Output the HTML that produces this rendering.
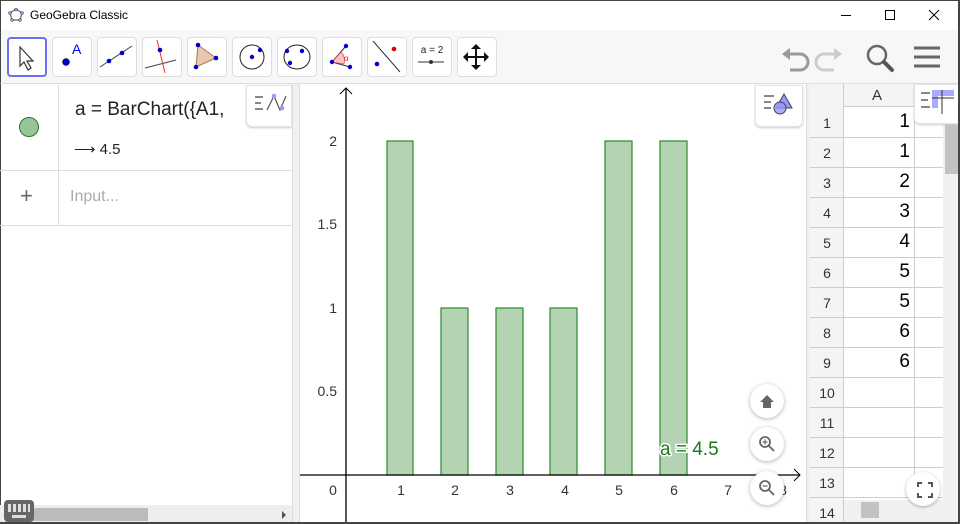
<!DOCTYPE html>
<html style="overflow:hidden"><head><meta charset="utf-8"><style>
*{margin:0;padding:0;box-sizing:border-box}
body{width:960px;height:524px;overflow:hidden;background:#fff;font-family:"Liberation Sans",sans-serif;position:relative}
.a{position:absolute}
.tb{position:absolute;top:37px;width:40px;height:40px;border:1px solid #ddd;border-radius:4px;background:#fff}
.sp div{position:absolute}
</style></head><body>
<div class="a" style="left:0;top:0;width:960px;height:30px;background:#fff;border-left:1px solid #444;border-right:1px solid #444;border-top:1px solid #444"></div>
<svg class="a" style="left:8px;top:8px" width="16" height="14"><polygon points="8,1 14,5 12,12 4,12 2,5" fill="none" stroke="#666" stroke-width="1.2"/><g fill="#99f" stroke="#333" stroke-width=".5"><circle cx="8" cy="1.5" r="1.5"/><circle cx="14" cy="5" r="1.5"/><circle cx="12" cy="12" r="1.5"/><circle cx="4" cy="12" r="1.5"/><circle cx="2" cy="5" r="1.5"/></g></svg>
<div class="a" style="left:30px;top:8px;font-size:12px;color:#000">GeoGebra Classic</div>
<svg class="a" style="left:838px;top:8px" width="110" height="14" stroke="#000" fill="none"><line x1="3" y1="7.5" x2="13" y2="7.5"/><rect x="47.5" y="2.5" width="9" height="9"/><path d="M91 2L101 12M101 2L91 12"/></svg>
<div class="a" style="left:0;top:30px;width:960px;height:54px;background:#f7f7f7;border-bottom:1px solid #ddd;border-left:1px solid #444;border-right:1px solid #444"></div>
<div class="tb" style="left:7px;border:2px solid #6d6df0"></div>
<div class="tb" style="left:52px"></div><div class="tb" style="left:97px"></div><div class="tb" style="left:142px"></div><div class="tb" style="left:187px"></div><div class="tb" style="left:232px"></div><div class="tb" style="left:277px"></div><div class="tb" style="left:322px"></div><div class="tb" style="left:367px"></div><div class="tb" style="left:412px"></div><div class="tb" style="left:457px"></div>
<svg class="a" style="left:0;top:37px" width="500" height="40">
<path d="M20 10L20 29L24 25L28 33L31 31L27 24L33 24Z" fill="#fff" stroke="#333" stroke-width="1.2"/>
<circle cx="66" cy="25" r="3.5" fill="#00c" stroke="#000" stroke-width=".5"/><text x="72" y="17" font-size="14" fill="#00f" font-family="Liberation Sans">A</text>
<line x1="100" y1="30" x2="132" y2="9" stroke="#444"/><circle cx="109" cy="24" r="2.3" fill="#00c"/><circle cx="122" cy="16" r="2.3" fill="#00c"/>
<line x1="145" y1="31" x2="176" y2="23" stroke="#444"/><line x1="157" y1="3" x2="165" y2="36" stroke="#e33"/><circle cx="160" cy="13" r="2.3" fill="#00c"/>
<polygon points="198,8 216,21 196,30" fill="#e8c8b0" stroke="#b07050"/><circle cx="198" cy="8" r="2.3" fill="#00c"/><circle cx="216" cy="21" r="2.3" fill="#00c"/><circle cx="196" cy="30" r="2.3" fill="#00c"/>
<circle cx="252" cy="20" r="12" fill="none" stroke="#222"/><circle cx="252" cy="20" r="2.2" fill="#00c"/><circle cx="260" cy="13" r="2.2" fill="#00c"/>
<ellipse cx="297" cy="20" rx="13" ry="12" fill="none" stroke="#222"/><circle cx="287" cy="14" r="2.2" fill="#00c"/><circle cx="302" cy="14" r="2.2" fill="#00c"/><circle cx="290" cy="26" r="2.2" fill="#00c"/>
<path d="M332 25L346 9M332 25L350 30" stroke="#333" fill="none"/><path d="M332 25L341 15A12 12 0 0 1 344 27Z" fill="#f8c0c0" stroke="#d33" stroke-width=".6"/><text x="344" y="24" font-size="8" fill="#d33">α</text><circle cx="332" cy="25" r="2.2" fill="#00c"/><circle cx="346" cy="9" r="2.2" fill="#00c"/><circle cx="350" cy="30" r="2.2" fill="#00c"/>
<line x1="373" y1="4" x2="400" y2="35" stroke="#333"/><circle cx="394" cy="12" r="2.3" fill="#d00"/><circle cx="377" cy="27" r="2.3" fill="#00c"/>
<text x="432" y="16" font-size="10" text-anchor="middle" fill="#222">a = 2</text><line x1="418" y1="25" x2="444" y2="25" stroke="#333"/><circle cx="431" cy="25" r="2" fill="#333"/>
<g fill="#111"><rect x="466" y="19" width="20" height="2"/><rect x="475" y="10" width="2" height="20"/><polygon points="476,7 471,12 481,12"/><polygon points="476,33 471,28 481,28"/><polygon points="463,20 468,15 468,25"/><polygon points="489,20 484,15 484,25"/></g>
</svg>
<svg class="a" style="left:780px;top:40px" width="170" height="36" fill="none">
<path d="M6 14H20a8 8 0 0 1 0 16H10" stroke="#999" stroke-width="3"/><polygon points="2,14 10,8 10,20" fill="#999"/>
<path d="M58 14H44a8 8 0 0 0 0 16H54" stroke="#ccc" stroke-width="3"/><polygon points="62,14 54,8 54,20" fill="#ccc"/>
<circle cx="97" cy="15" r="9" stroke="#666" stroke-width="2.5"/><line x1="104" y1="22" x2="112" y2="30" stroke="#555" stroke-width="4" stroke-linecap="round"/>
<path d="M134 8H160M134 17H160M134 26H160" stroke="#666" stroke-width="3"/>
</svg>
<div class="a" style="left:0;top:84px;width:1px;height:440px;background:#444"></div>
<div class="a" style="left:58px;top:85px;width:1px;height:140px;background:#ddd"></div>
<div class="a" style="left:0;top:170px;width:292px;height:1px;background:#ddd"></div>
<div class="a" style="left:0;top:225px;width:292px;height:1px;background:#ddd"></div>
<div class="a" style="left:19px;top:117px;width:20px;height:20px;border-radius:50%;background:#99c499;border:1px solid #2a7a2a"></div>
<div class="a" style="left:75px;top:99px;font-size:19px;color:#222;white-space:nowrap;width:172px;overflow:hidden">a = BarChart({A1,</div>
<div class="a" style="left:74px;top:140px;font-size:15px;color:#222">⟶ 4.5</div>
<div class="a" style="left:20px;top:184px;font-size:22px;color:#666;line-height:24px">+</div>
<div class="a" style="left:70px;top:188px;font-size:16px;color:#aaa">Input...</div>
<div class="a" style="left:246px;top:85px;width:46px;height:42px;background:#fff;border:1px solid #e4e4e4;border-radius:0 0 0 6px;box-shadow:0 1px 2px #ccc"></div>
<svg class="a" style="left:254px;top:92px" width="36" height="26"><path d="M1 5H9M1 11H7M1 17H9" stroke="#888" stroke-width="2"/><path d="M13 18L20 4L26 18L32 4" stroke="#555" fill="none" stroke-width="1.2"/><circle cx="20" cy="4" r="2.3" fill="#99f"/><circle cx="28" cy="16" r="2.3" fill="#99f"/></svg>
<div class="a" style="left:0;top:505px;width:292px;height:17px;background:#eee"></div>
<div class="a" style="left:8px;top:508px;width:140px;height:13px;background:#bbb"></div>
<div class="a" style="left:282px;top:511px;width:0;height:0;border-left:4px solid #555;border-top:4px solid transparent;border-bottom:4px solid transparent"></div>
<div class="a" style="left:4px;top:500px;width:30px;height:22px;background:#666;border-radius:4px"></div>
<div class="a" style="left:8px;top:504px;width:22px;height:8px;background:repeating-linear-gradient(90deg,#ddd 0 3px,transparent 3px 5px)"></div>
<div class="a" style="left:12px;top:515px;width:14px;height:3px;background:#ddd"></div>
<div class="a" style="left:292px;top:84px;width:8px;height:440px;background:#f0f0f0;border-left:1px solid #ddd;border-right:1px solid #ddd"></div>
<svg class="a" style="left:300px;top:84px" width="508" height="440" font-family="Liberation Sans" font-size="14">
<g fill="#b3d3b3" stroke="#2a8a2a" stroke-width="1.2">
<rect x="87" y="57" width="26" height="334"/><rect x="141" y="224" width="27" height="167"/><rect x="196" y="224" width="27" height="167"/><rect x="250" y="224" width="27" height="167"/><rect x="305" y="57" width="27" height="334"/><rect x="360" y="57" width="27" height="334"/>
</g>
<line x1="46" y1="4" x2="46" y2="440" stroke="#000" stroke-width="1.3"/><path d="M40 10L46 4L52 10" fill="none" stroke="#000"/>
<line x1="0" y1="391" x2="500" y2="391" stroke="#000" stroke-width="1.3"/><path d="M494 385L500 391L494 397" fill="none" stroke="#000"/>
<g fill="#333" text-anchor="end"><text x="37" y="62">2</text><text x="37" y="145">1.5</text><text x="37" y="229">1</text><text x="37" y="312">0.5</text></g>
<g fill="#333" text-anchor="middle"><text x="33" y="411">0</text><text x="101" y="411">1</text><text x="155" y="411">2</text><text x="210" y="411">3</text><text x="265" y="411">4</text><text x="319" y="411">5</text><text x="374" y="411">6</text><text x="428" y="411">7</text><text x="483" y="411">8</text></g>
<text x="360" y="371" font-size="19" fill="#1a7a1a" stroke="#fff" stroke-width="3" paint-order="stroke">a = 4.5</text>
<g fill="#fff" style="filter:drop-shadow(0 1px 2px rgba(0,0,0,.3))"><circle cx="467" cy="317" r="17"/><circle cx="467" cy="360" r="17"/><circle cx="467" cy="404" r="17"/></g>
<path d="M460 318L467 311L474 318H471V324H463V318Z" fill="#666"/>
<g stroke="#666" fill="none" stroke-width="1.8"><circle cx="465" cy="358" r="5"/><line x1="469" y1="362" x2="474" y2="367"/><path d="M462.5 358H467.5M465 355.5V360.5" stroke-width="1.2"/><circle cx="465" cy="402" r="5"/><line x1="469" y1="406" x2="474" y2="411"/><path d="M462.5 402H467.5" stroke-width="1.2"/></g>
</svg>
<div class="a" style="left:755px;top:85px;width:48px;height:42px;background:#fff;border:1px solid #e4e4e4;border-radius:0 0 6px 6px;box-shadow:0 1px 2px #ccc"></div>
<svg class="a" style="left:763px;top:93px" width="34" height="26"><path d="M1 3H11M1 9H8M1 15H8" stroke="#888" stroke-width="2"/><polygon points="21,1 29,15 13,15" fill="#99f" stroke="#444"/><circle cx="17" cy="15" r="6" fill="#99f" stroke="#444" fill-opacity=".8"/></svg>
<div class="a" style="left:806px;top:84px;width:4px;height:440px;background:#f0f0f0;border-left:1px solid #ddd"></div>
<div class="a sp" style="left:810px;top:84px;width:150px;height:438px;overflow:hidden;background:#fff;font-size:16px">
<div style="left:0;top:0;width:150px;height:23px;background:#f4f4f4;border-bottom:1px solid #ccc"></div>
<div style="left:0;top:0;width:34px;height:440px;background:#f4f4f4;border-right:1px solid #ccc"></div>
<div style="left:104px;top:0;width:1px;height:440px;background:#ccc"></div>
<div style="left:62px;top:3px;font-size:15px;color:#333">A</div>
<div style="left:0;top:53px;width:133px;height:1px;background:#ccc"></div><div style="left:0;top:83px;width:133px;height:1px;background:#ccc"></div><div style="left:0;top:113px;width:133px;height:1px;background:#ccc"></div><div style="left:0;top:143px;width:133px;height:1px;background:#ccc"></div><div style="left:0;top:173px;width:133px;height:1px;background:#ccc"></div><div style="left:0;top:203px;width:133px;height:1px;background:#ccc"></div><div style="left:0;top:233px;width:133px;height:1px;background:#ccc"></div><div style="left:0;top:263px;width:133px;height:1px;background:#ccc"></div><div style="left:0;top:293px;width:133px;height:1px;background:#ccc"></div><div style="left:0;top:323px;width:133px;height:1px;background:#ccc"></div><div style="left:0;top:353px;width:133px;height:1px;background:#ccc"></div><div style="left:0;top:383px;width:133px;height:1px;background:#ccc"></div><div style="left:0;top:413px;width:133px;height:1px;background:#ccc"></div>
<div style="left:0;top:24px;width:34px;text-align:center;font-size:14px;line-height:30px;color:#333">1<br>2<br>3<br>4<br>5<br>6<br>7<br>8<br>9<br>10<br>11<br>12<br>13<br>14</div>
<div style="left:40px;top:23px;width:60px;text-align:right;font-size:19px;line-height:30px;color:#000">1<br>1<br>2<br>3<br>4<br>5<br>5<br>6<br>6</div>
<div style="left:133px;top:23px;width:17px;height:400px;background:#f0f0f0"></div>
<div style="left:135px;top:40px;width:13px;height:50px;background:#c2c2c2"></div>
<div style="left:34px;top:416px;width:116px;height:22px;background:#f0f0f0"></div>
<div style="left:51px;top:418px;width:18px;height:16px;background:#c2c2c2"></div>
<div style="left:104px;top:0;width:46px;height:40px;background:#fff;border:1px solid #e4e4e4;border-radius:0 0 0 6px;box-shadow:0 1px 2px #ccc"></div>
<div style="left:96px;top:388px;width:34px;height:34px;border-radius:50%;background:#fff;box-shadow:0 1px 3px rgba(0,0,0,.3)"></div>
</div>
<svg class="a" style="left:920px;top:90px" width="36" height="26"><path d="M1 3H10M1 10H8M1 17H10" stroke="#888" stroke-width="2"/><rect x="12" y="0" width="22" height="6" fill="#aaf"/><rect x="12" y="6" width="6" height="12" fill="#aaf"/><path d="M12 8H34M22 0V24" stroke="#333"/></svg>
<svg class="a" style="left:917px;top:482px" width="16" height="16" stroke="#555" stroke-width="2" fill="none"><path d="M1 5V1H5M11 1H15V5M15 11V15H11M5 15H1V11"/></svg>
<div class="a" style="left:0;top:522px;width:960px;height:2px;background:#444"></div>
<div class="a" style="left:958px;top:0;width:2px;height:524px;background:#444"></div>
</body></html>
